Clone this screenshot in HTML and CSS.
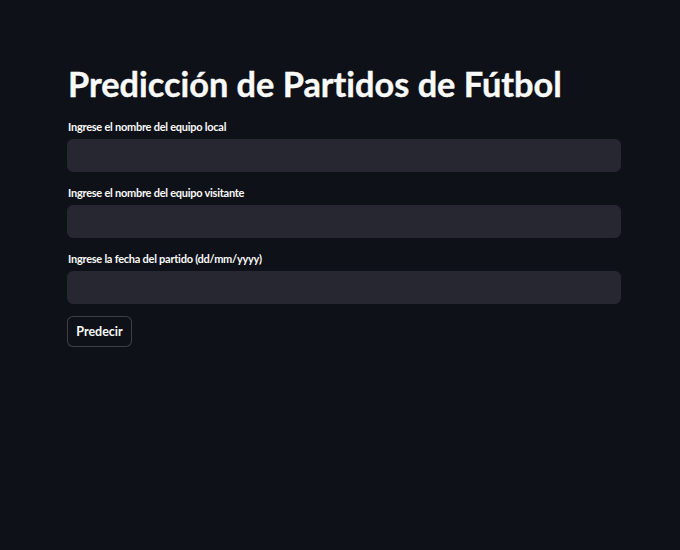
FILE: index.html
```html
<!DOCTYPE html>
<html lang="es">
<head>
<meta charset="utf-8">
<title>Predicción de Partidos de Fútbol</title>
<link rel="stylesheet" href="styles.css">
</head>
<body>
<main class="main">
  <h1 class="title">Predicción de Partidos de Fútbol</h1>
  <div class="field">
    <label class="label" for="local">Ingrese el nombre del equipo local</label>
    <input class="input" id="local" type="text">
  </div>
  <div class="field">
    <label class="label" for="visit">Ingrese el nombre del equipo visitante</label>
    <input class="input" id="visit" type="text">
  </div>
  <div class="field">
    <label class="label" for="fecha">Ingrese la fecha del partido (dd/mm/yyyy)</label>
    <input class="input" id="fecha" type="text">
  </div>
  <button class="button" type="button">Predecir</button>
</main>
</body>
</html>
```
FILE: styles.css
```css
html, body {
  margin: 0;
  padding: 0;
  background: #0e1117;
  color: #fafafa;
  font-family: "Lato", "Noto Sans", sans-serif;
  font-variant-ligatures: none;
}
.main {
  width: 554px;
  margin-left: 67px;
  padding-top: 62px;
  display: flex;
  flex-direction: column;
}
.title {
  margin: 0 0 0 1px;
  font-size: 34.3px;
  font-weight: 700;
  line-height: 44px;
  padding-bottom: 13px;
  -webkit-text-stroke: 0.4px #fafafa;
}
.field {
  display: flex;
  flex-direction: column;
  margin-bottom: 13px;
}
.label {
  font-size: 11px;
  font-weight: 700;
  letter-spacing: -0.25px;
  line-height: 16px;
  margin-left: 1px;
  padding-bottom: 4px;
  color: #fafafa;
}
.input {
  height: 33px;
  box-sizing: border-box;
  border: 1px solid #262730;
  border-radius: 6px;
  background: #262730;
  color: #fafafa;
  outline: none;
  padding: 0 10px;
}
.button {
  align-self: flex-start;
  width: 65px;
  height: 31px;
  margin-top: -1px;
  box-sizing: border-box;
  border: 1px solid rgba(250,250,250,0.2);
  border-radius: 6px;
  background: #0e1117;
  color: #fafafa;
  font-family: inherit;
  font-size: 12.5px;
  font-weight: 700;
  padding: 0;
}
```
